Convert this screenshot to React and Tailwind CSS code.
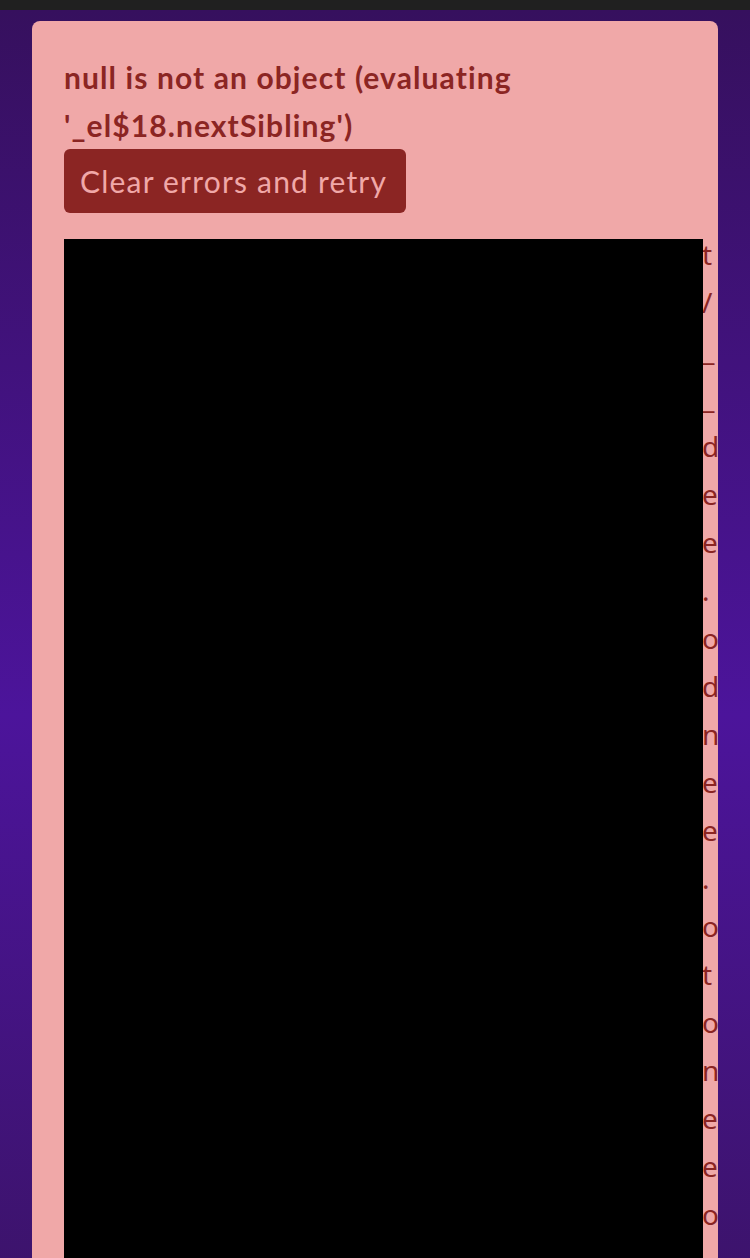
import React from 'react'

const traceChars = ['t', '/', '_', '_', 'd', 'e', 'e', '.', 'o', 'd', 'n', 'e', 'e', '.', 'o', 't', 'o', 'n', 'e', 'e', 'o', 'e']

const App = () => {
  return (
    <div className="h-[1258px] overflow-hidden flex flex-col" style={{ fontFamily: 'Lato, "Noto Sans", sans-serif' }}>
      <div className="h-[10px] bg-[#202020] shrink-0" />
      <div className="flex-1 px-8 pt-[11px] bg-[linear-gradient(180deg,#36105e_0%,#4c149b_50%,#38135f_100%)]">
        <div className="h-[1400px] rounded-lg bg-[#f0a8a8] p-8 overflow-hidden">
          <h1 className="text-[30px] leading-[48px] font-bold text-[#8b2523] tracking-[1.1px]">
            null is not an object (evaluating '_el$18.nextSibling')
          </h1>
          <button className="h-16 px-4 rounded-md bg-[#8b2523] text-[#f0a8a8] text-[30px] leading-[48px] tracking-[1.2px] w-[342px] text-left whitespace-nowrap">
            Clear errors and retry
          </button>
          <div className="mt-[26px] flex w-[700px]">
            <div className="w-[639px] h-[1100px] bg-black shrink-0 relative z-10" />
            <div className="w-[15px] overflow-hidden">
              <div className="-ml-[1px] -mt-[9px] text-[28px] leading-[48px] text-[#8b2523]" style={{ fontFamily: '"Noto Sans", sans-serif' }}>
                {traceChars.map((c, i) => (
                  <div key={i}>{c}</div>
                ))}
              </div>
            </div>
          </div>
        </div>
      </div>
    </div>
  )
}

export default App
